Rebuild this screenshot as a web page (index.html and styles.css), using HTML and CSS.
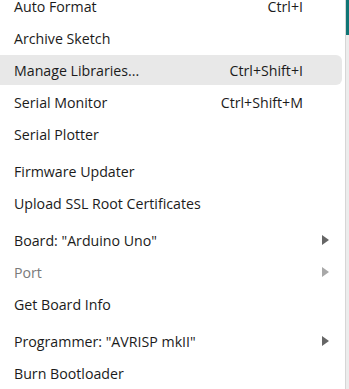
FILE: index.html
```html
<!DOCTYPE html>
<html>
<head>
<meta charset="utf-8">
<link rel="stylesheet" href="styles.css">
</head>
<body>
<div class="page">
  <div class="menu">
    <div class="list">
      <div class="item"><span class="label">Auto Format</span><span class="key">Ctrl+I</span></div>
      <div class="item"><span class="label">Archive Sketch</span></div>
      <div class="item active"><span class="label">Manage Libraries...</span><span class="key">Ctrl+Shift+I</span></div>
      <div class="item"><span class="label">Serial Monitor</span><span class="key">Ctrl+Shift+M</span></div>
      <div class="item"><span class="label">Serial Plotter</span></div>
      <div class="sep"></div>
      <div class="item"><span class="label">Firmware Updater</span></div>
      <div class="item"><span class="label">Upload SSL Root Certificates</span></div>
      <div class="sep"></div>
      <div class="item"><span class="label">Board: "Arduino Uno"</span><span class="arrow"></span></div>
      <div class="item disabled"><span class="label">Port</span><span class="arrow"></span></div>
      <div class="item"><span class="label">Get Board Info</span></div>
      <div class="sep"></div>
      <div class="item"><span class="label">Programmer: "AVRISP mkII"</span><span class="arrow"></span></div>
      <div class="item"><span class="label">Burn Bootloader</span></div>
    </div>
  </div>
  <div class="strip"><div class="strip-top"></div><div class="strip-rest"></div></div>
</div>
</body>
</html>
```
FILE: styles.css
```css
html, body {
  margin: 0;
  padding: 0;
  background: #ffffff;
}
body {
  width: 349px;
  height: 389px;
  overflow: hidden;
  font-family: "Open Sans", "Noto Sans", sans-serif;
  font-size: 14.2px;
  color: #1b1b1b;
}
.page {
  display: flex;
  height: 389px;
}
.menu {
  width: 345px;
  border-right: 1px solid #d6d6d6;
  background: #ffffff;
  overflow: hidden;
}
.list {
  margin-top: -10px;
  display: flex;
  flex-direction: column;
}
.item {
  height: 30px;
  margin: 1px 0;
  display: flex;
  align-items: center;
  padding-left: 14px;
  margin-right: 3px;
  border-radius: 0 6px 6px 0;
}
.item.active {
  background: #e8e8e8;
}
.label {
  flex: 1;
  white-space: nowrap;
}
.key {
  width: 130px;
  margin-right: 39px;
  text-align: right;
  white-space: nowrap;
}
.arrow {
  width: 0;
  height: 0;
  border-top: 5px solid transparent;
  border-bottom: 5px solid transparent;
  border-left: 7px solid #666666;
  margin-right: 13px;
}
.item.disabled {
  color: #7a7a7a;
}
.item.disabled .arrow {
  border-left-color: #a8a8a8;
}
.sep {
  height: 5px;
}
.strip {
  flex: 1;
  display: flex;
  flex-direction: column;
}
.strip-top {
  height: 35px;
  background: #0f7575;
}
.strip-rest {
  flex: 1;
  background: #ececec;
}
```
